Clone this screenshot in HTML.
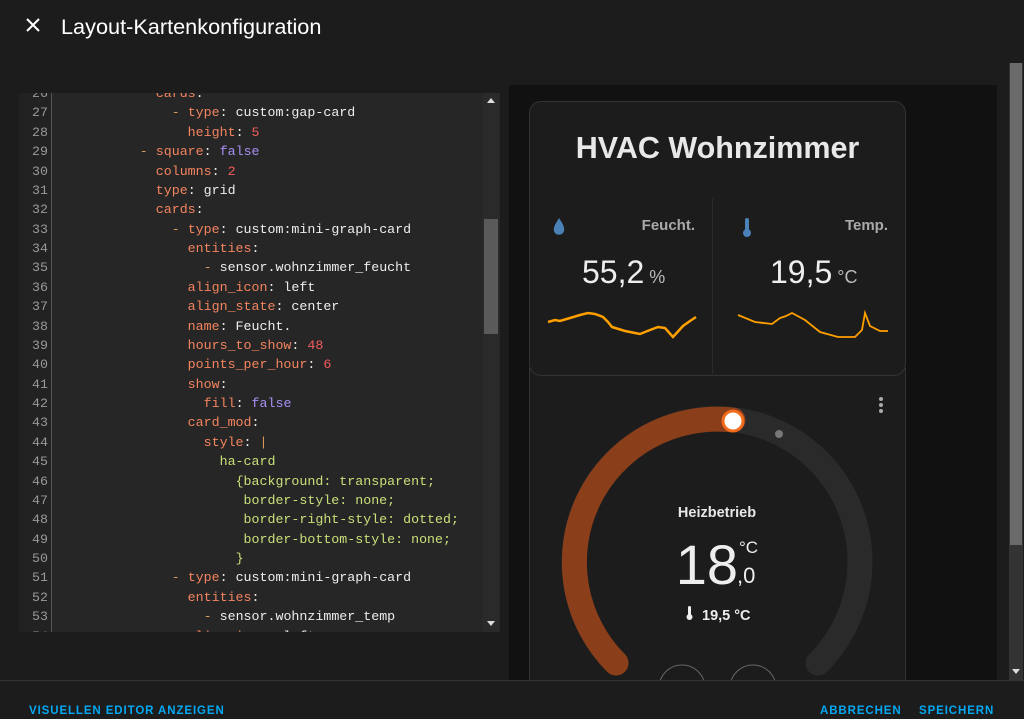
<!DOCTYPE html>
<html><head><meta charset="utf-8"><style>
*{margin:0;padding:0;box-sizing:border-box}
body{width:1024px;height:719px;background:#1c1c1c;font-family:"Liberation Sans",sans-serif;position:relative;overflow:hidden;color:#e1e1e1}
.title{position:absolute;left:61px;top:14px;font-size:21.7px;color:#fff}
.close{position:absolute;left:24px;top:16px}
.editor{position:absolute;left:19px;top:93px;width:481px;height:539px;background:#262626;overflow:hidden}
.gut{position:absolute;left:0;top:0;width:33px;height:100%;background:#222;border-right:1px solid #555}
pre{position:absolute;left:0;top:-9px;font-family:"Liberation Mono",monospace;font-size:13.3px;line-height:19.38px;color:#eee}
.n{display:inline-block;width:29px;text-align:right;color:#999;margin-right:12px}
.k{color:#f4845f}.v{color:#eee}.r{color:#f25c5c}.p{color:#a990f5}.g{color:#c8e07a}.d{color:#d89a5a}
.sb{position:absolute;left:464px;top:0;width:16px;height:539px;background:#2a2a2a}
.preview{position:absolute;left:509px;top:85px;width:488px;height:595px;background:#111}
.card{position:absolute;left:529px;top:101px;width:377px;height:275px;background:#1c1c1c;border:1px solid #333;border-radius:12px}
.card2{position:absolute;left:529px;top:368px;width:377px;height:320px;background:#1c1c1c;border:1px solid #333;border-top:none}
.pscroll{position:absolute;left:1009px;top:63px;width:14px;height:617px;background:#333}
.foot{position:absolute;left:0;top:680px;width:1024px;height:39px;border-top:1px solid #333;background:#1c1c1c}
.btn{position:absolute;top:705px;font-size:11.5px;font-weight:bold;letter-spacing:0.9px;color:#03a9f4}
</style></head><body>
<svg class="close" width="18" height="18" viewBox="0 0 18 18"><path d="M3 3L15 15M15 3L3 15" stroke="#fff" stroke-width="2"/></svg>
<div class="title">Layout-Kartenkonfiguration</div>
<div class="editor"><div class="gut"></div>
<pre><span class="n">26</span>            <span class="k">cards</span>:
<span class="n">27</span>              <span class="d">-</span> <span class="k">type</span>: custom:gap-card
<span class="n">28</span>                <span class="k">height</span>: <span class="r">5</span>
<span class="n">29</span>          <span class="d">-</span> <span class="k">square</span>: <span class="p">false</span>
<span class="n">30</span>            <span class="k">columns</span>: <span class="r">2</span>
<span class="n">31</span>            <span class="k">type</span>: grid
<span class="n">32</span>            <span class="k">cards</span>:
<span class="n">33</span>              <span class="d">-</span> <span class="k">type</span>: custom:mini-graph-card
<span class="n">34</span>                <span class="k">entities</span>:
<span class="n">35</span>                  <span class="d">-</span> sensor.wohnzimmer_feucht
<span class="n">36</span>                <span class="k">align_icon</span>: left
<span class="n">37</span>                <span class="k">align_state</span>: center
<span class="n">38</span>                <span class="k">name</span>: Feucht.
<span class="n">39</span>                <span class="k">hours_to_show</span>: <span class="r">48</span>
<span class="n">40</span>                <span class="k">points_per_hour</span>: <span class="r">6</span>
<span class="n">41</span>                <span class="k">show</span>:
<span class="n">42</span>                  <span class="k">fill</span>: <span class="p">false</span>
<span class="n">43</span>                <span class="k">card_mod</span>:
<span class="n">44</span>                  <span class="k">style</span>: <span class="d">|</span>
<span class="n">45</span>                    <span class="g">ha-card</span>
<span class="n">46</span>                      <span class="g">{background: transparent;</span>
<span class="n">47</span>                       <span class="g">border-style: none;</span>
<span class="n">48</span>                       <span class="g">border-right-style: dotted;</span>
<span class="n">49</span>                       <span class="g">border-bottom-style: none;</span>
<span class="n">50</span>                      <span class="g">}</span>
<span class="n">51</span>              <span class="d">-</span> <span class="k">type</span>: custom:mini-graph-card
<span class="n">52</span>                <span class="k">entities</span>:
<span class="n">53</span>                  <span class="d">-</span> sensor.wohnzimmer_temp
<span class="n">54</span>                <span class="k">align_icon</span>: left
</pre>
<div class="sb"><div style="position:absolute;left:1px;top:126px;width:14px;height:115px;background:#5a5a5a"></div>
<svg style="position:absolute;left:4px;top:4px" width="8" height="6"><path d="M0 6L4 1L8 6Z" fill="#ddd"/></svg>
<svg style="position:absolute;left:4px;top:528px" width="8" height="6"><path d="M0 0L4 5L8 0Z" fill="#ddd"/></svg></div>
</div>
<div class="preview"></div>
<div class="card2"></div>
<div class="card">
<div style="position:absolute;left:0;width:100%;top:29px;text-align:center;font-size:30.5px;font-weight:bold;color:#e8e8e8">HVAC Wohnzimmer</div>
<div style="position:absolute;left:182px;top:96px;width:1px;height:178px;background:#2a2a2a"></div>
<div style="position:absolute;right:210px;top:115px;font-size:15px;font-weight:bold;color:#aaa">Feucht.</div>
<div style="position:absolute;right:17px;top:115px;font-size:15px;font-weight:bold;color:#aaa">Temp.</div>
<div style="position:absolute;left:52px;top:152px;font-size:32px;color:#eee">55,2<span style="font-size:18px;color:#bbb"> %</span></div>
<div style="position:absolute;left:240px;top:152px;font-size:32px;color:#eee">19,5<span style="font-size:18px;color:#bbb"> °C</span></div>
</div>
<svg style="position:absolute;left:0;top:0" width="1024" height="719">
<path d="M559 218C563 224 566 229 563 233C560 236 555 235 554 231C553 227 556 223 559 218Z" fill="#4a82b8"/>
<rect x="745" y="218" width="4" height="14" rx="2" fill="#4a82b8"/><circle cx="747" cy="233" r="4" fill="#4a82b8"/>
<polyline points="548,322 555,320 560,321 570,318 580,315 588,313 595,314 603,317 608,322 612,327 625,331 640,334 650,330 658,327 665,328 673,337 683,326 690,321 696,317" fill="none" stroke="#ff9f00" stroke-width="2.5"/>
<polyline points="738,315 755,322 772,324 780,318 786,316 792,313 805,320 820,332 838,337 855,337 862,330 865,313 870,326 880,331 888,331" fill="none" stroke="#ff9f00" stroke-width="1.8"/>
<path d="M616 663A143 143 0 1 1 818 663" fill="none" stroke="#2a2a2a" stroke-width="25" stroke-linecap="round"/>
<path d="M616 663A143 143 0 0 1 733 420" fill="none" stroke="#8b3e1a" stroke-width="25" stroke-linecap="round"/>
<circle cx="733" cy="421" r="10" fill="#fff" stroke="#f26a1b" stroke-width="3"/>
<circle cx="779" cy="434" r="4" fill="#777"/>
<circle cx="881" cy="399" r="2" fill="#aaa"/><circle cx="881" cy="405" r="2" fill="#aaa"/><circle cx="881" cy="411" r="2" fill="#aaa"/>
<circle cx="682" cy="688" r="23" fill="none" stroke="#666"/><circle cx="753" cy="688" r="23" fill="none" stroke="#666"/>
<rect x="688" y="606" width="3" height="10" rx="1.5" fill="#eee"/><circle cx="689.5" cy="617" r="3" fill="#eee"/>
<text x="717" y="517" text-anchor="middle" font-family="Liberation Sans" font-size="14.5" font-weight="bold" fill="#e8e8e8">Heizbetrieb</text>
<text x="738" y="584" text-anchor="end" font-family="Liberation Sans" font-size="56" fill="#eee">18</text>
<text x="739" y="553" font-family="Liberation Sans" font-size="17" fill="#eee">°C</text>
<text x="737" y="583" font-family="Liberation Sans" font-size="22" fill="#eee">,0</text>
<text x="702" y="620" font-family="Liberation Sans" font-size="14.5" font-weight="bold" fill="#eee">19,5 °C</text>
</svg>
<div class="pscroll"><div style="position:absolute;left:1px;top:0;width:12px;height:482px;background:#6a6a6a"></div>
<svg style="position:absolute;left:3px;top:606px" width="8" height="6"><path d="M0 0L4 5L8 0Z" fill="#ddd"/></svg></div>
<div class="foot"></div>
<div class="btn" style="left:29px">VISUELLEN EDITOR ANZEIGEN</div>
<div class="btn" style="left:820px">ABBRECHEN</div>
<div class="btn" style="left:919px">SPEICHERN</div>
</body></html>
